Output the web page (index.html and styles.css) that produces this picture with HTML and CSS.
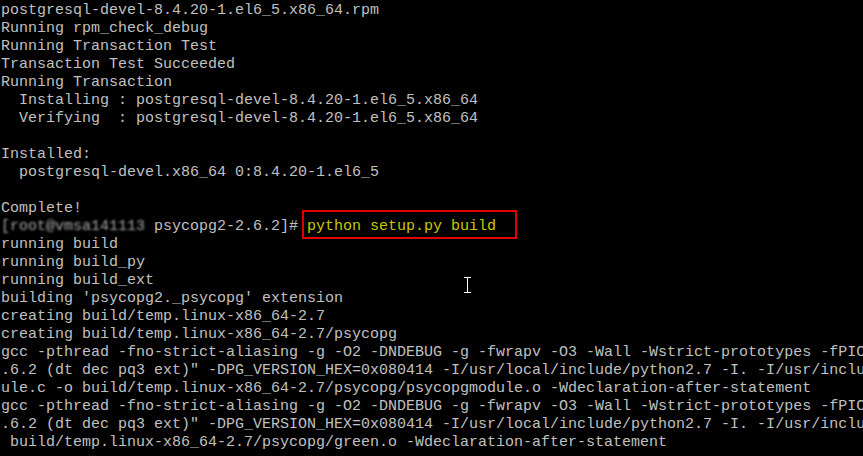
FILE: index.html
```html
<!DOCTYPE html>
<html lang="en">
<head>
    <meta charset="UTF-8">
    <title>Terminal</title>
    <link rel="stylesheet" href="styles.css">
</head>
<body>
    <div class="term">
<pre class="out">postgresql-devel-8.4.20-1.el6_5.x86_64.rpm
Running rpm_check_debug
Running Transaction Test
Transaction Test Succeeded
Running Transaction
  Installing : postgresql-devel-8.4.20-1.el6_5.x86_64
  Verifying  : postgresql-devel-8.4.20-1.el6_5.x86_64

Installed:
  postgresql-devel.x86_64 0:8.4.20-1.el6_5

Complete!
<span class="blur">[root@vmsa141113</span> psycopg2-2.6.2]# <span class="cmd">python setup.py build</span>
running build
running build_py
running build_ext
building 'psycopg2._psycopg' extension
creating build/temp.linux-x86_64-2.7
creating build/temp.linux-x86_64-2.7/psycopg
gcc -pthread -fno-strict-aliasing -g -O2 -DNDEBUG -g -fwrapv -O3 -Wall -Wstrict-prototypes -fPIC
.6.2 (dt dec pq3 ext)" -DPG_VERSION_HEX=0x080414 -I/usr/local/include/python2.7 -I. -I/usr/inclu
ule.c -o build/temp.linux-x86_64-2.7/psycopg/psycopgmodule.o -Wdeclaration-after-statement
gcc -pthread -fno-strict-aliasing -g -O2 -DNDEBUG -g -fwrapv -O3 -Wall -Wstrict-prototypes -fPIC
.6.2 (dt dec pq3 ext)" -DPG_VERSION_HEX=0x080414 -I/usr/local/include/python2.7 -I. -I/usr/inclu
 build/temp.linux-x86_64-2.7/psycopg/green.o -Wdeclaration-after-statement</pre>
        <!-- annotation box round the command -->
        <div class="mark"></div>
        <svg class="ibeam" width="9" height="18" viewBox="0 0 9 18">
            <path d="M1 1.5h7M1 16.5h7M4.5 1.5v15" stroke="#ffffff" stroke-width="1" fill="none"/>
        </svg>
    </div>
</body>
</html>
```

FILE: styles.css
```css
body {
    margin: 0;
    background: #000;
    overflow: hidden;
}
.term {
    position: relative;
    width: 863px;
    height: 456px;
    overflow: hidden;
    background: #000;
}
.out {
    margin: 0;
    padding: 2px 0 0 1px;
    font-family: "Liberation Mono", "Courier New", monospace;
    font-size: 15px;
    line-height: 18px;
    color: #c0c0c0;
    white-space: pre;
}
.cmd {
    color: #c8c800;
}
.blur {
    color: #a8a8a8;
    filter: blur(1.2px);
}
.mark {
    position: absolute;
    left: 302px;
    top: 210px;
    width: 211px;
    height: 25px;
    border: 2px solid #e00000;
}
.ibeam {
    position: absolute;
    left: 463px;
    top: 276px;
}
```
